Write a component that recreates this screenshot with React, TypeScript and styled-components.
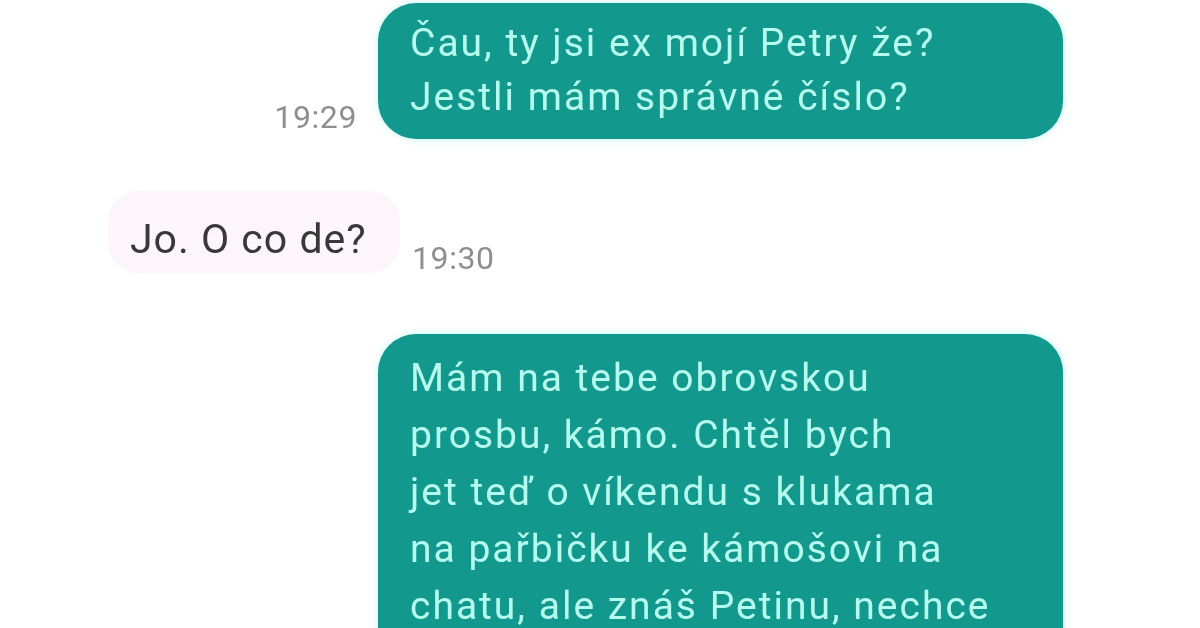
import styled, { createGlobalStyle } from 'styled-components';

const GlobalStyle = createGlobalStyle`
  html, body {
    margin: 0;
    padding: 0;
    background: #ffffff;
    overflow: hidden;
  }
  body {
    font-family: Roboto, 'Noto Sans', sans-serif;
  }
`;

const Thread = styled.div`
  width: 1200px;
  height: 628px;
  overflow: hidden;
  display: flex;
  flex-direction: column;
  padding-top: 3px;
  box-sizing: border-box;
`;

const Row = styled.div<{ $out?: boolean; $gap: number }>`
  display: flex;
  align-items: flex-end;
  justify-content: ${(p) => (p.$out ? 'flex-end' : 'flex-start')};
  padding: ${(p) => (p.$out ? '0 137px 0 0' : '0 0 0 108px')};
  margin-top: ${(p) => p.$gap}px;
  flex-shrink: 0;
`;

const Time = styled.span<{ $out?: boolean }>`
  font-size: 32px;
  line-height: normal;
  color: #8e8e8e;
  letter-spacing: 0.6px;
  margin: ${(p) => (p.$out ? '0 21px 3px 0' : '0 0 -4px 12px')};
  filter: blur(0.5px);
`;

const OutBubble = styled.div<{ $lh: number; $pt: number; $pb: number }>`
  width: 685px;
  box-sizing: border-box;
  background: #12988c;
  color: #b6fcee;
  border-radius: 38px;
  padding: ${(p) => `${p.$pt}px 30px ${p.$pb}px 32px`};
  font-size: 39px;
  line-height: ${(p) => p.$lh}px;
  letter-spacing: 2px;
  box-shadow: 0 0 7px rgba(120, 240, 230, 0.5);
  filter: blur(0.5px);
`;

const InBubble = styled.div`
  width: 292px;
  height: 82px;
  box-sizing: border-box;
  background: #fcf6fa;
  color: #383838;
  border-radius: 30px;
  padding: 14px 0 0 22px;
  display: flex;
  align-items: center;
  font-size: 41px;
  letter-spacing: 1px;
  filter: blur(0.5px);
`;

const Line = styled.div`
  white-space: nowrap;
`;

export default function App() {
  return (
    <>
      <GlobalStyle />
      <Thread>
        <Row $out $gap={0}>
          <Time $out>19:29</Time>
          <OutBubble $lh={54} $pt={13} $pb={15}>
            <Line>Čau, ty jsi ex mojí Petry že?</Line>
            <Line>Jestli mám správné číslo?</Line>
          </OutBubble>
        </Row>

        <Row $gap={52}>
          <InBubble>Jo. O co de?</InBubble>
          <Time>19:30</Time>
        </Row>

        <Row $out $gap={61}>
          <OutBubble $lh={57} $pt={16} $pb={40}>
            <Line>Mám na tebe obrovskou</Line>
            <Line>prosbu, kámo. Chtěl bych</Line>
            <Line>jet teď o víkendu s klukama</Line>
            <Line>na pařbičku ke kámošovi na</Line>
            <Line>chatu, ale znáš Petinu, nechce</Line>
          </OutBubble>
        </Row>
      </Thread>
    </>
  );
}
